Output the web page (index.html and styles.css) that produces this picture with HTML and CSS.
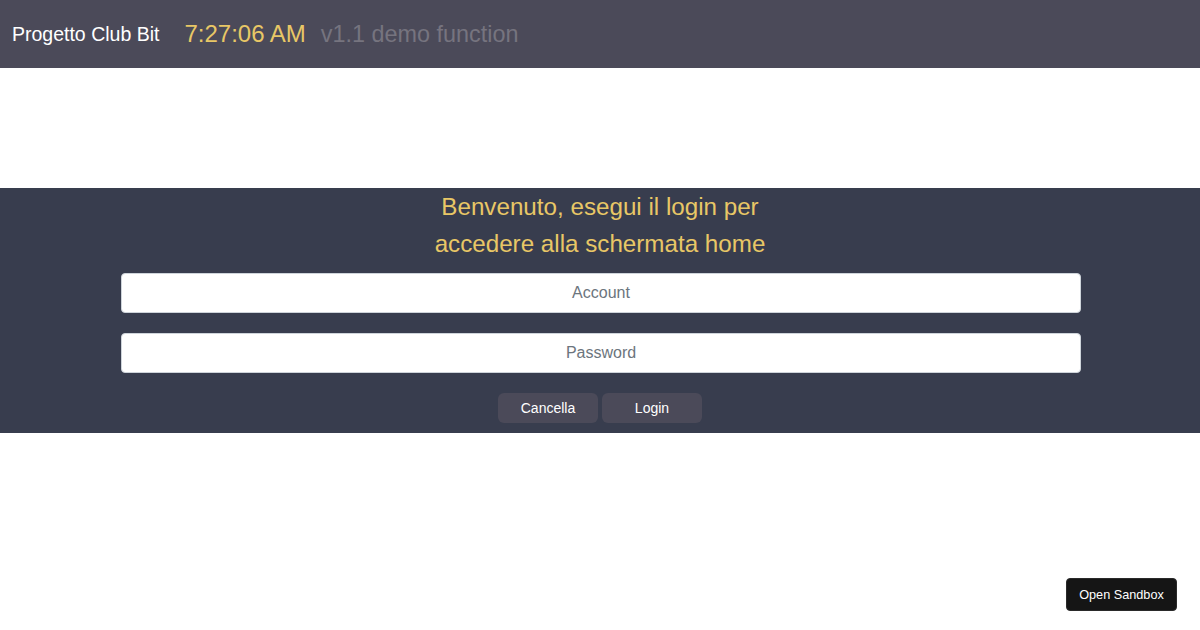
FILE: index.html
```html
<!DOCTYPE html>
<html lang="it">
<head>
    <meta charset="UTF-8">
    <title>Progetto Club Bit</title>
    <link rel="stylesheet" href="styles.css">
</head>
<body>
    <header class="topbar">
        <span class="brand">Progetto Club Bit</span>
        <span class="clock" id="clock">7:27:06 AM</span>
        <span class="version">v1.1 demo function</span>
    </header>

    <div class="spacer"></div>

    <section class="login">
        <h2 class="login-title">Benvenuto, esegui il login per accedere alla schermata home</h2>
        <form class="login-form" onsubmit="return false">
            <input type="text" placeholder="Account">
            <input type="password" placeholder="Password">
            <div class="actions">
                <button type="reset">Cancella</button>
                <button type="submit">Login</button>
            </div>
        </form>
    </section>

    <button class="sandbox">Open Sandbox</button>
</body>
</html>
```

FILE: styles.css
```css
body {
    margin: 0;
    font-family: "Liberation Sans", Arial, sans-serif;
    background-color: #ffffff;
}
.topbar {
    display: flex;
    align-items: center;
    height: 68px;
    padding-left: 12px;
    background-color: #4b4a59;
}
.brand {
    color: #ffffff;
    font-size: 19.5px;
}
.clock {
    margin-left: 25px;
    color: #e8c766;
    font-size: 24px;
}
.version {
    margin-left: 15px;
    color: #76747f;
    font-size: 23.4px;
}
.spacer {
    height: 120px;
}
.login {
    background-color: #383d4e;
    padding-bottom: 10px;
}
.login-title {
    max-width: 360px;
    margin: 0 auto;
    color: #e8c766;
    font-size: 24.2px;
    font-weight: normal;
    line-height: 37px;
    text-align: center;
}
.login-form {
    display: flex;
    flex-direction: column;
    align-items: center;
    gap: 20px;
    padding-top: 11px;
    padding-left: 2px;
}
.login-form input {
    box-sizing: border-box;
    width: 960px;
    height: 40px;
    border: 1px solid #ced4da;
    border-radius: 4px;
    font-family: inherit;
    font-size: 16px;
    text-align: center;
    background-color: #ffffff;
}
.login-form input::placeholder {
    color: #6c757d;
}
.actions {
    display: flex;
    gap: 4px;
    margin-left: -2px;
}
.actions button {
    width: 100px;
    height: 30px;
    border: none;
    border-radius: 6px;
    background-color: #4b4a59;
    color: #ffffff;
    font-family: inherit;
    font-size: 14px;
    cursor: pointer;
}
.sandbox {
    position: fixed;
    right: 23px;
    bottom: 19px;
    width: 111px;
    height: 33px;
    border: 1px solid #2a2a2a;
    border-radius: 4px;
    background-color: #151515;
    color: #ffffff;
    font-family: inherit;
    font-size: 12.7px;
}
```
